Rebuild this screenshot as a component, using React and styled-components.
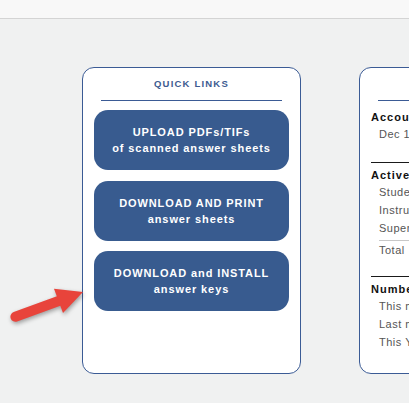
import React from 'react';
import styled, { createGlobalStyle } from 'styled-components';

const GlobalStyle = createGlobalStyle`
  html, body {
    margin: 0;
    padding: 0;
    overflow: hidden;
    background: #f0f1f1;
    font-family: "Liberation Sans", Arial, sans-serif;
  }
`;

const TopBar = styled.div`
  height: 18px;
  background: #f8f8f8;
  border-bottom: 1px solid #d4d4d4;
`;

const Main = styled.div`
  display: flex;
  gap: 58px;
  padding: 48px 0 0 82px;
  position: relative;
`;

const Card = styled.div`
  flex: 0 0 219px;
  height: 307px;
  box-sizing: border-box;
  background: #fff;
  border: 1px solid #3b5b95;
  border-radius: 12px;
  display: flex;
  flex-direction: column;
`;

const CardTitle = styled.div`
  padding-top: 10px;
  font-size: 9.5px;
  line-height: 11px;
  font-weight: 700;
  letter-spacing: 1.2px;
  color: #3d5b90;
  text-align: center;
  white-space: nowrap;
`;

const Divider = styled.div`
  height: 1px;
  margin: 11px 18px 0;
  background: #3b5b95;
`;

const LinkList = styled.div`
  display: flex;
  flex-direction: column;
  gap: 10.5px;
  padding: 9px 11px 0;
`;

const LinkButton = styled.a`
  height: 60px;
  border-radius: 14px;
  background: #385b8f;
  color: #fff;
  display: flex;
  flex-direction: column;
  align-items: center;
  justify-content: center;
  font-size: 11px;
  line-height: 16px;
  font-weight: 700;
  letter-spacing: 0.9px;
  text-decoration: none;
  white-space: nowrap;
  cursor: pointer;
`;

const Section = styled.div`
  margin: 0 11px;
  padding: ${p => (p.$first ? '8px 0 19px' : '4px 0 17px')};
  border-top: ${p => (p.$first ? 'none' : '1px solid #1a1a1a')};
`;

const SectionLabel = styled.div`
  font-size: 11px;
  line-height: 16px;
  font-weight: 700;
  letter-spacing: 1px;
  color: #111;
  white-space: nowrap;
`;

const Item = styled.div`
  display: flex;
  justify-content: space-between;
  font-size: 11px;
  line-height: 18px;
  letter-spacing: 0.5px;
  color: #555;
  white-space: nowrap;
  border-top: ${p => (p.$total ? '1px solid #c8c8c8' : 'none')};
  margin: ${p => (p.$total ? '3px 0 0 8px' : '0')};
  padding-left: ${p => (p.$total ? '0' : '8px')};
`;

const Pointer = styled.svg`
  position: absolute;
  left: 0;
  top: 261px;
  width: 90px;
  height: 45px;
  filter: drop-shadow(1px 2px 2px rgba(0, 0, 0, 0.35));
  pointer-events: none;
`;

const links = [
  ['UPLOAD PDFs/TIFs', 'of scanned answer sheets'],
  ['DOWNLOAD AND PRINT', 'answer sheets'],
  ['DOWNLOAD and INSTALL', 'answer keys'],
];

export default function App() {
  return (
    <>
      <GlobalStyle />
      <TopBar />
      <Main>
        <Card>
          <CardTitle>QUICK LINKS</CardTitle>
          <Divider />
          <LinkList>
            {links.map(([a, b]) => (
              <LinkButton key={a}>
                <span>{a}</span>
                <span>{b}</span>
              </LinkButton>
            ))}
          </LinkList>
        </Card>

        <Card>
          <CardTitle>SUMMARY</CardTitle>
          <Divider />
          <Section $first>
            <SectionLabel>Account Expiration</SectionLabel>
            <Item><span>Dec 15, 2025</span></Item>
          </Section>
          <Section>
            <SectionLabel>Active Users</SectionLabel>
            <Item><span>Students</span><span>412</span></Item>
            <Item><span>Instructors</span><span>18</span></Item>
            <Item><span>Supervisors</span><span>3</span></Item>
            <Item $total><span>Total</span><span>433</span></Item>
          </Section>
          <Section>
            <SectionLabel>Number of Scans</SectionLabel>
            <Item><span>This month</span><span>1,204</span></Item>
            <Item><span>Last month</span><span>2,876</span></Item>
            <Item><span>This Year</span><span>9,530</span></Item>
          </Section>
        </Card>

        <Pointer viewBox="0 280 90 45">
          <line x1="15.4" y1="316.8" x2="60" y2="300.5" stroke="#e8443b" strokeWidth="10" strokeLinecap="round" />
          <polygon points="83,292 54,288.7 63,313.1" fill="#e8443b" />
        </Pointer>
      </Main>
    </>
  );
}
